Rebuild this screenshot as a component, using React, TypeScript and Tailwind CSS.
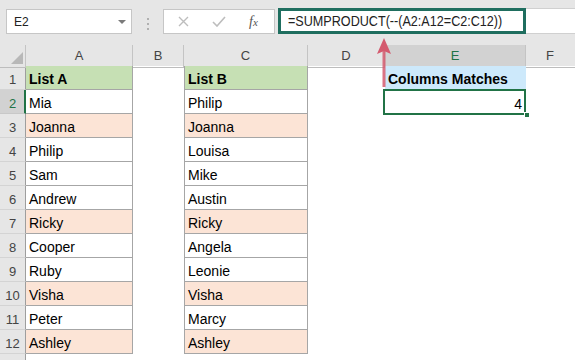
const listA = ["Mia", "Joanna", "Philip", "Sam", "Andrew", "Ricky", "Cooper", "Ruby", "Visha", "Peter", "Ashley"];
const listB = ["Philip", "Joanna", "Louisa", "Mike", "Austin", "Ricky", "Angela", "Leonie", "Visha", "Marcy", "Ashley"];

const COLS = "grid grid-cols-[26px_107px_51px_124px_77px_141px_1fr]";
const TEXT = "pt-[4px] pl-[3px] leading-[19px] text-[14px] text-black";

function RowHeader({ n, selected }: { n: number; selected?: boolean }) {
  return (
    <div
      className={
        selected
          ? "h-[24px] border-b border-r-2 border-b-[#c8c8c8] border-r-[#217346] bg-[#d2d2d2] pt-[5px] pl-px text-center text-[13px] leading-[18px] text-[#217346]"
          : "h-[24px] border-b border-r border-b-[#d4d4d4] border-r-[#9e9e9e] bg-[#e6e6e6] pt-[5px] text-center text-[13px] leading-[18px] text-[#444]"
      }
    >
      {n}
    </div>
  );
}

export default function App() {
  const rows = listA.map((a, i) => ({ n: i + 2, a, c: listB[i], match: a === listB[i] }));

  return (
    <div className="relative h-[360px] w-[575px] overflow-hidden bg-white font-['Liberation_Sans',Arial,sans-serif]">
      {/* formula bar */}
      <div className="flex h-[45px] items-start bg-[#e6e6e6] pt-[8px]">
        <div className="ml-[6px] mt-[1px] flex h-[25px] w-[126px] items-center justify-between border border-[#c6c6c6] bg-white pl-[7px] pr-[5px]">
          <span className="text-[12px] text-[#222]">E2</span>
          <svg width="8" height="4" viewBox="0 0 8 4">
            <path d="M0 0 L8 0 L4 4 Z" fill="#7a7a7a" />
          </svg>
        </div>
        <div className="flex w-[31px] flex-col items-center gap-[3px] pt-[10px]">
          <span className="h-[2px] w-[2px] bg-[#b0b0b0]" />
          <span className="h-[2px] w-[2px] bg-[#b0b0b0]" />
          <span className="h-[2px] w-[2px] bg-[#b0b0b0]" />
        </div>
        <div className="mt-[1px] flex h-[25px] w-[112px] items-center border border-[#c6c6c6] bg-white">
          <svg className="ml-[14px]" width="11" height="11" viewBox="0 0 11 11">
            <path d="M1 1 L10 10 M10 1 L1 10" stroke="#bdbdbd" strokeWidth="1.4" />
          </svg>
          <svg className="ml-[23px]" width="14" height="11" viewBox="0 0 14 11">
            <path d="M1 6 L5 10 L13 1" stroke="#bdbdbd" strokeWidth="1.6" fill="none" />
          </svg>
          <span className="ml-[23px] font-['Liberation_Serif',serif] text-[14px] italic text-[#555]">
            f<span className="text-[11px]">x</span>
          </span>
        </div>
        <div className="ml-[3px] flex h-[26px] flex-1 border-y border-[#d0d0d0] bg-white">
          <div className="-my-px flex h-[26px] w-[248px] items-center border-[3px] border-[#1f6e5f] pl-[7px]">
            <span className="inline-block origin-left scale-x-[0.84] whitespace-nowrap text-[15px] text-[#222]">
              =SUMPRODUCT(--(A2:A12=C2:C12))
            </span>
          </div>
        </div>
      </div>

      {/* column headers */}
      <div className={`${COLS} h-[21px] bg-[#e6e6e6] text-[13px] text-[#444]`}>
        <div className="relative border-b border-r border-b-[#bdbdbd] border-r-[#c4c4c4]">
          <svg className="absolute bottom-[3px] right-[2px]" width="12" height="12" viewBox="0 0 12 12">
            <path d="M12 0 L12 12 L0 12 Z" fill="#b8b8b8" />
          </svg>
        </div>
        <div className="flex items-center justify-center border-b border-r border-b-[#bdbdbd] border-r-[#c4c4c4]">A</div>
        <div className="flex items-center justify-center border-b border-r border-b-[#bdbdbd] border-r-[#c4c4c4]">B</div>
        <div className="flex items-center justify-center border-b border-r border-b-[#bdbdbd] border-r-[#c4c4c4]">C</div>
        <div className="flex items-center justify-center border-b border-r border-b-[#bdbdbd] border-r-[#c4c4c4]">D</div>
        <div className="flex items-center justify-center border-b-2 border-r border-b-[#217346] border-r-[#c4c4c4] bg-[#d2d2d2] pt-px text-[#217346]">E</div>
        <div className="flex items-center border-b border-b-[#bdbdbd] pl-[20px]">F</div>
      </div>

      {/* row 1 */}
      <div className={COLS}>
        <RowHeader n={1} />
        <div className={`border-b border-r border-[#a6a6a6] bg-[#c6e0b4] font-bold ${TEXT}`}>List A</div>
        <div />
        <div className={`border-b border-l border-r border-[#a6a6a6] bg-[#c6e0b4] font-bold ${TEXT}`}>List B</div>
        <div />
        <div className={`bg-[#cde9fb] font-bold ${TEXT}`}>Columns Matches</div>
        <div />
      </div>

      {rows.map((r) => (
        <div key={r.n} className={COLS}>
          <RowHeader n={r.n} selected={r.n === 2} />
          <div className={`border-b border-r border-[#a6a6a6] ${r.match ? "bg-[#fce4d6]" : "bg-white"} ${TEXT}`}>{r.a}</div>
          <div />
          <div className={`border-b border-l border-r border-[#a6a6a6] ${r.match ? "bg-[#fce4d6]" : "bg-white"} ${TEXT}`}>{r.c}</div>
          <div />
          {r.n === 2 ? (
            <div className="relative">
              <div className={`absolute -left-[2px] -top-px h-[26px] w-[143px] border-2 border-[#217346] pr-[2px] text-right ${TEXT}`}>4</div>
              <span className="absolute -bottom-[4px] -right-[4px] h-[6px] w-[6px] border border-white bg-[#217346]" />
            </div>
          ) : (
            <div />
          )}
          <div />
        </div>
      ))}

      {/* row 13 stub */}
      <div className={COLS}>
        <div className="h-[8px] border-r border-[#9e9e9e] bg-[#e6e6e6]" />
      </div>

      {/* callout arrow */}
      <svg className="absolute left-[376px] top-[38px]" width="16" height="50" viewBox="0 0 16 50">
        <path d="M8 0 L15 16 L8 13 L1 16 Z" fill="#d45a6e" />
        <rect x="6.5" y="12" width="3" height="37" fill="#d45a6e" opacity="0.85" />
      </svg>
    </div>
  );
}
